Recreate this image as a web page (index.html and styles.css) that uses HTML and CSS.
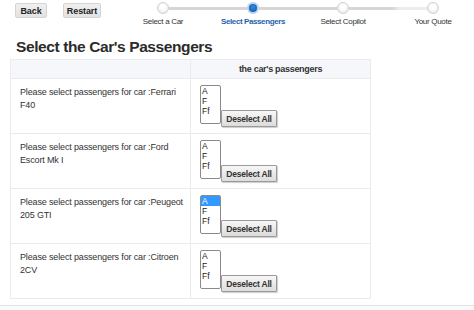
FILE: index.html
```html
<!DOCTYPE html>
<html>
<head>
	<title>Select the Car's Passengers</title>
	<link rel="stylesheet" href="styles.css">
</head>
<body>
	<div class="topbar">
		<button class="navbtn">Back</button>
		<button class="navbtn">Restart</button>

		<div class="steps">
			<div class="step done">
				<div class="track"><span class="line none"></span><span class="dot"></span><span class="line"></span></div>
				<div class="label">Select a Car</div>
			</div>
			<div class="step active">
				<div class="track"><span class="line"></span><span class="dot"></span><span class="line"></span></div>
				<div class="label">Select Passengers</div>
			</div>
			<div class="step">
				<div class="track"><span class="line"></span><span class="dot"></span><span class="line"></span></div>
				<div class="label">Select Copilot</div>
			</div>
			<div class="step">
				<div class="track"><span class="line light"></span><span class="dot"></span><span class="line none"></span></div>
				<div class="label">Your Quote</div>
			</div>
		</div>
	</div>

	<h2 class="title">Select the Car's Passengers</h2>

	<table class="cars">
		<tr>
			<th></th><th>the car's passengers</th>
		</tr>
		<tr>
			<td>Please select passengers for car :Ferrari F40</td>
			<td>
				<div class="pick">
					<select multiple size="4"><option>A</option><option>F</option><option>Ff</option></select>
					<button class="clear">Deselect All</button>
				</div>
			</td>
		</tr>
		<tr>
			<td>Please select passengers for car :Ford Escort Mk I</td>
			<td>
				<div class="pick">
					<select multiple size="4"><option>A</option><option>F</option><option>Ff</option></select>
					<button class="clear">Deselect All</button>
				</div>
			</td>
		</tr>
		<tr>
			<td>Please select passengers for car :Peugeot 205 GTI</td>
			<td>
				<div class="pick">
					<select multiple size="4"><option selected>A</option><option>F</option><option>Ff</option></select>
					<button class="clear">Deselect All</button>
				</div>
			</td>
		</tr>
		<tr>
			<td>Please select passengers for car :Citroen 2CV</td>
			<td>
				<div class="pick">
					<select multiple size="4"><option>A</option><option>F</option><option>Ff</option></select>
					<button class="clear">Deselect All</button>
				</div>
			</td>
		</tr>
	</table>

	<div class="footer"></div>
</body>
</html>
```

FILE: styles.css
```css
html {font-family: "Liberation Sans", Arial, Helvetica, sans-serif; color:#333;}
body {margin:0; background:#fff; overflow:hidden;}

.topbar {display:flex; align-items:flex-start; height:36px; padding-left:15px;
	box-sizing:border-box; overflow:hidden;}
.navbtn {flex:none; font-family:inherit; font-size:9px; font-weight:bold; color:#222;
	height:15px; padding:0; margin-top:3px; border:1px solid #d4d4d4;
	border-radius:2px; background:linear-gradient(#f0f0f0, #e2e2e2);
	letter-spacing:-0.1px;}
.navbtn:first-child {width:32px;}
.navbtn + .navbtn {width:38px; margin-left:16px;}

.steps {display:flex; margin-left:17px; flex:none;}
.step {width:90px; flex:none;}
.track {display:flex; align-items:center; height:12px; margin-top:2px;}
.line {flex:1; height:3px; background:#d6d6d6;}
.line.light {background:linear-gradient(90deg, #d6d6d6 10%, #ececec 30%);}
.line.none {background:none;}
.dot {width:10px; height:10px; border-radius:50%; border:1px solid #d0d0d0;
	background:radial-gradient(circle at 50% 40%, #fff 30%, #e4e4e4 90%);}
.step.active .dot {width:8px; height:8px; border:2px solid #b7d2ee;
	background:radial-gradient(circle at 50% 40%, #3a8ad8, #0f5fb5 80%);}
.label {text-align:center; font-size:8px; letter-spacing:-0.3px; margin-top:3px;
	white-space:nowrap; color:#333;}
.step.active .label {color:#1f63ad; font-weight:bold; letter-spacing:-0.4px;}

.title {font-size:15.5px; line-height:18px; margin:2px 0 3px 16px; color:#2b2b2b;
	letter-spacing:-0.4px;}

.cars {border-collapse:collapse; margin-left:10px; width:361px;}
.cars th, .cars td {border:1px solid #e9ebee; vertical-align:top;}
.cars th {background:#f5f7fa; height:18px; padding:0; font-size:9px;
	text-align:center; line-height:18px; letter-spacing:-0.3px;}
.cars th:first-child {width:179px;}
.cars td {background:#fff; height:42px; padding:6px 9px; font-size:9px;
	line-height:13px; letter-spacing:-0.15px;}
.cars td:first-child {padding:7px 4px 6px 9px; height:41px;}

.pick {display:flex; align-items:flex-end;}
.pick select {width:21px; height:39px; margin:0 0 3px 0; padding:0;
	border:1px solid #8a8a8a; font-family:inherit; font-size:8.5px; overflow:hidden;
	color:#222; background:#fff; letter-spacing:0;}
.pick option {padding:0 1px; line-height:10px; min-height:10px;}
.pick option:checked {background:#3399ff linear-gradient(#3399ff, #3399ff); color:#fff;}
.clear {font-family:inherit; font-size:8.5px; font-weight:bold; color:#333;
	width:56px; height:17px; padding:0; border:1px solid #9a9a9a; border-radius:1px;
	background:linear-gradient(#f7f7f7, #dcdcdc); box-shadow:1px 1px 1px #ccc;
	letter-spacing:-0.2px;}

.footer {margin-top:6px; border-top:1px solid #e2e2e2; height:6px; background:#fafafa;}
```
